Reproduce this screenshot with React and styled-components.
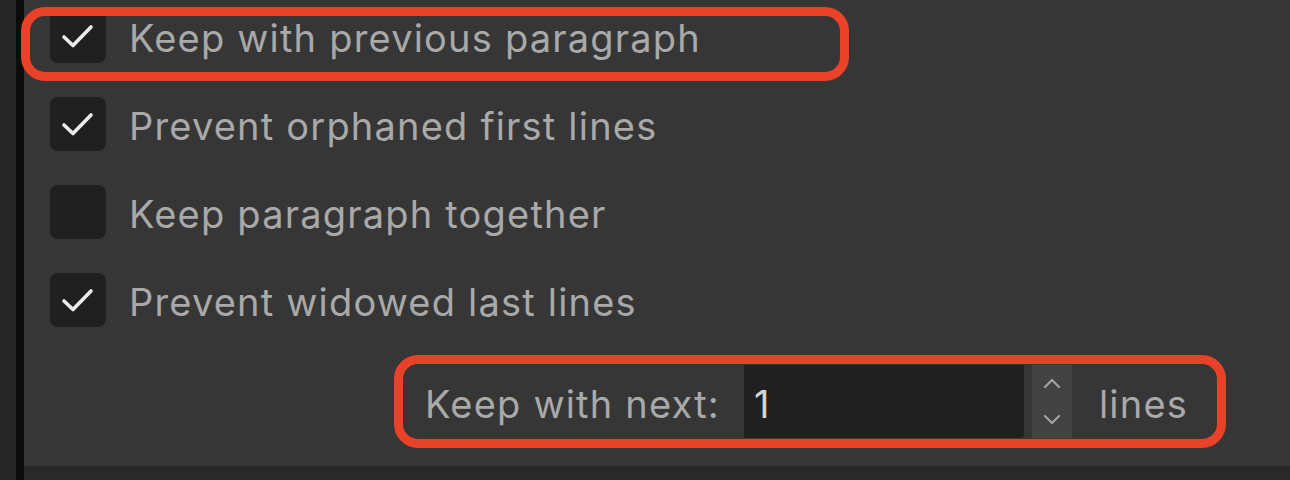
import React from 'react';
import styled, { createGlobalStyle, css } from 'styled-components';

const GlobalStyle = createGlobalStyle`
  html, body {
    margin: 0;
    padding: 0;
    background: #363636;
  }
  body {
    font-family: Inter, "Noto Sans", "Liberation Sans", sans-serif;
  }
`;

const Screen = styled.div`
  display: flex;
  width: 1290px;
  height: 480px;
  overflow: hidden;
  background: #262626;
`;

const Gutter = styled.div`
  width: 16px;
  background: #262626;
`;

const Divider = styled.div`
  width: 8px;
  background: #0c0c0c;
`;

const Main = styled.div`
  flex: 1;
  display: flex;
  flex-direction: column;
`;

const Panel = styled.div`
  height: 466px;
  box-sizing: border-box;
  background: #363636;
  padding: 9px 0 0 26px;
  display: flex;
  flex-direction: column;
`;

const Footer = styled.div`
  flex: 1;
  background: #292929;
`;

// annotation outline drawn over a row
const highlight = css`
  &::before {
    content: '';
    position: absolute;
    border: 9px solid #ea4129;
    border-radius: 24px;
    pointer-events: none;
  }
`;

const CheckRow = styled.label`
  position: relative;
  display: flex;
  align-items: center;
  gap: 23px;
  height: 54px;
  margin-bottom: 34px;
  ${(p) => p.$highlighted && highlight}
  &::before {
    left: -29px;
    top: -2px;
    width: 810px;
    height: 56px;
  }
`;

const Box = styled.span`
  width: 56px;
  height: 54px;
  border-radius: 8px;
  background: #202020;
  display: flex;
  align-items: center;
  justify-content: center;
  flex-shrink: 0;
`;

const Label = styled.span`
  font-size: 38px;
  color: #a9a9a9;
  letter-spacing: 1.2px;
  padding-top: 4px;
  white-space: nowrap;
`;

const NextRow = styled.div`
  position: relative;
  align-self: flex-end;
  margin-right: 102px;
  margin-top: 4px;
  display: flex;
  align-items: center;
  height: 73px;
  ${highlight}
  &::before {
    left: -31px;
    right: -38px;
    top: -10px;
    bottom: -10px;
  }
`;

const NextLabel = styled(Label)`
  margin-right: 24px;
`;

const NumberField = styled.div`
  width: 280px;
  height: 73px;
  box-sizing: border-box;
  background: #202020;
  border-radius: 0 0 4px 0;
  color: #d4d4d4;
  font-size: 38px;
  display: flex;
  align-items: center;
  padding: 4px 0 0 10px;
`;

const Stepper = styled.div`
  width: 40px;
  height: 73px;
  margin-left: 8px;
  background: #434343;
  display: flex;
  flex-direction: column;
  align-items: center;
  justify-content: center;
  gap: 27px;
`;

const Unit = styled(Label)`
  margin-left: 27px;
`;

const Check = () => (
  <svg width="56" height="54" viewBox="0 0 56 54">
    <polyline
      points="14,28 23,36.5 41,18"
      fill="none"
      stroke="#ececec"
      strokeWidth="3.6"
      strokeLinecap="round"
      strokeLinejoin="round"
    />
  </svg>
);

const Chevron = ({ up }) => (
  <svg width="18" height="10" viewBox="0 0 18 10">
    <polyline
      points={up ? '2,9 9,2 16,9' : '2,1 9,8 16,1'}
      fill="none"
      stroke="#a6a6a6"
      strokeWidth="2"
      strokeLinecap="round"
      strokeLinejoin="round"
    />
  </svg>
);

const options = [
  { label: 'Keep with previous paragraph', checked: true, highlighted: true },
  { label: 'Prevent orphaned first lines', checked: true },
  { label: 'Keep paragraph together', checked: false },
  { label: 'Prevent widowed last lines', checked: true },
];

const App = () => (
  <>
    <GlobalStyle />
    <Screen>
      <Gutter />
      <Divider />
      <Main>
        <Panel>
          {options.map((o) => (
            <CheckRow key={o.label} $highlighted={o.highlighted}>
              <Box>{o.checked && <Check />}</Box>
              <Label>{o.label}</Label>
            </CheckRow>
          ))}
          <NextRow>
            <NextLabel>Keep with next:</NextLabel>
            <NumberField>1</NumberField>
            <Stepper>
              <Chevron up />
              <Chevron />
            </Stepper>
            <Unit>lines</Unit>
          </NextRow>
        </Panel>
        <Footer />
      </Main>
    </Screen>
  </>
);

export default App;
